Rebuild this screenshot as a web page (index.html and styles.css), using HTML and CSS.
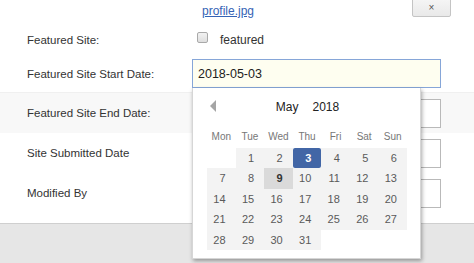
FILE: index.html
```html
<!DOCTYPE html>
<html lang="en">
    <head>
        <meta charset="UTF-8">
        <title>Edit Site</title>
        <link rel="stylesheet" href="styles.css">
    </head>
    <body>
        <div class="modal">
            <div class="modal-body">
                <div class="row row-link">
                    <span class="label"></span>
                    <a class="file-link" href="#">profile.jpg</a>
                    <button class="close-btn">×</button>
                </div>
                <div class="row row-check">
                    <span class="label">Featured Site:</span>
                    <label class="check"><span class="box"></span>featured</label>
                </div>
                <div class="row row-start">
                    <span class="label">Featured Site Start Date:</span>
                    <input class="field field-focus" type="text" value="2018-05-03">
                </div>
                <div class="row row-alt">
                    <span class="label">Featured Site End Date:</span>
                    <input class="field" type="text">
                </div>
                <div class="row">
                    <span class="label">Site Submitted Date</span>
                    <input class="field" type="text">
                </div>
                <div class="row">
                    <span class="label">Modified By</span>
                    <input class="field" type="text">
                </div>
            </div>
            <div class="modal-footer"></div>

            <div class="datepicker">
                <div class="dp-head">
                    <span class="dp-prev"></span>
                    <span class="dp-month">May</span>
                    <span class="dp-year">2018</span>
                </div>
                <div class="dp-grid">
                    <span class="dp-dow">Mon</span><span class="dp-dow">Tue</span><span class="dp-dow">Wed</span><span class="dp-dow">Thu</span><span class="dp-dow">Fri</span><span class="dp-dow">Sat</span><span class="dp-dow">Sun</span>
                </div>
                <div class="dp-grid dp-days">
                    <span class="empty"></span><span>1</span><span>2</span><span class="selected">3</span><span>4</span><span>5</span><span>6</span>
                    <span>7</span><span>8</span><span class="today">9</span><span>10</span><span>11</span><span>12</span><span>13</span>
                    <span>14</span><span>15</span><span>16</span><span>17</span><span>18</span><span>19</span><span>20</span>
                    <span>21</span><span>22</span><span>23</span><span>24</span><span>25</span><span>26</span><span>27</span>
                    <span>28</span><span>29</span><span>30</span><span>31</span><span class="empty"></span><span class="empty"></span><span class="empty"></span>
                </div>
            </div>
        </div>
    </body>
</html>
```

FILE: styles.css
```css
body {
margin: 0;
padding: 0;
background-color: #fff;
font-family: "Liberation Sans", Arial, sans-serif;
font-size: 11.5px;
color: #333;
}

.modal {
position: relative;
width: 474px;
height: 263px;
overflow: hidden;
}

/* Form rows */
.modal-body {
height: 223px;
box-sizing: border-box;
}

.row {
display: grid;
grid-template-columns: 165px 249px;
align-items: center;
height: 40px;
padding-left: 27px;
}

.row-link {
height: 25px;
position: relative;
align-items: start;
}

.row-check {
height: 30px;
}

.row-start {
height: 37px;
}

.row-alt {
height: 41px;
background-color: #f8f8f8;
border-top: 1px solid #f0f0f0;
box-sizing: border-box;
}

.file-link {
color: #3563b5;
font-size: 12px;
margin-left: 10px;
margin-top: 4px;
}

.close-btn {
position: absolute;
left: 412px;
top: -6px;
width: 39px;
height: 23px;
border: 1px solid #c4c4c4;
border-radius: 2px;
background: linear-gradient(#f8f8f8, #e9e9e9);
font-size: 10px;
color: #555;
padding: 4px 0 0;
}

.check {
display: flex;
align-items: center;
margin-left: 5px;
font-size: 12px;
}

.box {
width: 9px;
height: 9px;
border: 1px solid #a9a9a9;
border-radius: 2px;
background: linear-gradient(#f2f2f2, #dedede);
margin-right: 12px;
margin-top: -5px;
}

.field {
width: 249px;
height: 29px;
box-sizing: border-box;
border: 1px solid #b9b9b9;
background-color: #fff;
font-family: "Liberation Sans", Arial, sans-serif;
font-size: 12.5px;
color: #222;
padding: 0 5px;
}

.field-focus {
background-color: #fefef0;
border-color: #86a6d8;
}

.modal-footer {
height: 40px;
border-top: 1px solid #cfcfcf;
background-color: #e6e6e6;
}

/* Datepicker popup */
.datepicker {
position: absolute;
left: 192px;
top: 88px;
width: 229px;
height: 171px;
box-sizing: border-box;
padding: 0 13px 0 14px;
background-color: #fff;
border: 1px solid #d6d6d6;
border-top: none;
box-shadow: 1px 2px 4px rgba(0, 0, 0, 0.35);
}

.dp-head {
position: relative;
height: 36px;
display: flex;
justify-content: center;
align-items: center;
gap: 14px;
font-size: 12px;
color: #222;
padding-left: 1px;
padding-top: 2px;
box-sizing: border-box;
}

.dp-prev {
position: absolute;
left: 3px;
top: 12px;
width: 0;
height: 0;
border-top: 6px solid transparent;
border-bottom: 6px solid transparent;
border-right: 6px solid #a5a5a5;
}

.dp-grid {
display: grid;
grid-template-columns: repeat(7, 1fr);
}

.dp-dow {
height: 23px;
line-height: 25px;
text-align: center;
font-size: 10px;
color: #777;
}

.dp-days {
margin-top: 1px;
}

.dp-days span {
height: 20.4px;
line-height: 20.4px;
text-align: right;
padding-right: 10px;
background-color: #f3f3f3;
font-size: 11px;
color: #5a5a5a;
}

.dp-days .empty {
background-color: #fff;
}

.dp-days .selected {
background-color: #4266a6;
color: #fff;
font-weight: bold;
border-radius: 2px;
}

.dp-days .today {
background-color: #dadada;
color: #333;
font-weight: bold;
}
```
